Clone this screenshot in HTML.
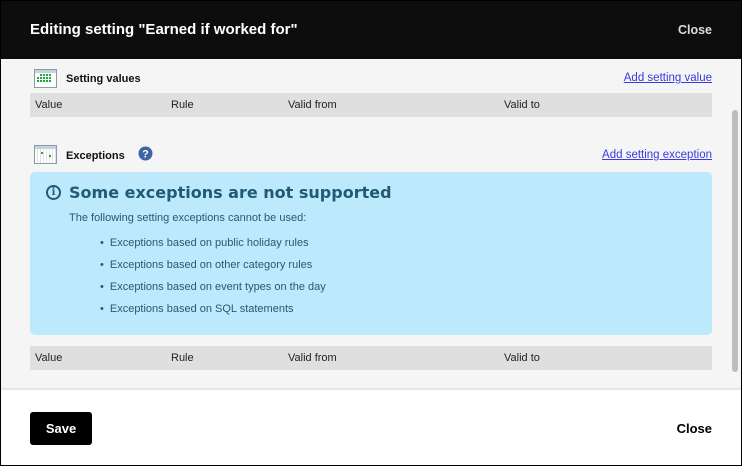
<!DOCTYPE html><html><head><style>
*{margin:0;padding:0;box-sizing:border-box}
body{width:742px;height:466px;overflow:hidden;font-family:"Liberation Sans",sans-serif;background:#fff;position:relative}
.frame{position:absolute;inset:0;border:1px solid #000}
.hdr{position:absolute;left:0;top:0;width:742px;height:59px;background:#0d0d0d;color:#fff}
.hdr h1{position:absolute;left:30px;top:21px;font-size:15px;font-weight:bold}
.hdr .c{position:absolute;right:30px;top:23px;font-size:12.5px;font-weight:bold;color:#ddd}
.body{position:absolute;left:1px;top:59px;width:740px;height:331px;background:#f5f5f5;border-bottom:2px solid #e6e6e6}
.sb{position:absolute;left:732px;top:110px;width:6px;height:262px;background:#bdbdbd;border-radius:3px}
.sec{position:absolute;left:66px;font-size:11px;font-weight:bold;color:#111}
.ico{position:absolute;left:34px;width:23px;height:19px;border:1px solid #8a9aa8;background:#fff}
.ico .t{height:3px;background:#c8d2dc}
a{position:absolute;right:30px;font-size:11.5px;color:#3a3adf;text-decoration:underline}
.th{position:absolute;left:30px;width:682px;height:24px;background:#dfdfdf;font-size:11px;color:#222}
.th span{position:absolute;top:6px}
.info{position:absolute;left:30px;top:172px;width:682px;height:163px;background:#bde9fc;border-radius:5px;color:#2a5872}
.info h2{position:absolute;left:39px;top:11px;font-family:"DejaVu Sans",sans-serif;font-size:16px;font-weight:bold;color:#215a75}
.info .i{position:absolute;left:16px;top:13px;width:15px;height:15px;border:2px solid #215a75;border-radius:50%;font:bold 10px "DejaVu Serif",serif;text-align:center;line-height:11px;color:#215a75}
.info p{position:absolute;left:39px;top:40px;font-size:11px}
.info ul{position:absolute;left:70px;top:65px;font-size:11px;list-style:none}
.info li{height:22px}
.info li:before{content:"•";margin-right:6px}
.save{position:absolute;left:30px;top:412px;width:62px;height:33px;background:#000;border-radius:3px;color:#fff;font-size:13px;font-weight:bold;text-align:center;line-height:33px}
.fc{position:absolute;right:30px;top:421px;font-size:13px;font-weight:bold}
</style></head><body>
<div class="hdr"><h1>Editing setting "Earned if worked for"</h1><div class="c">Close</div></div>
<div class="body"></div>
<div class="sb"></div>
<div class="ico" style="top:69px"><div class="t"></div><svg width="21" height="14"><g fill="#1fa83a"><rect x="5" y="1" width="2" height="2"/><rect x="8" y="1" width="2" height="2"/><rect x="11" y="1" width="2" height="2"/><rect x="14" y="1" width="2" height="2"/><rect x="2" y="4" width="2" height="2"/><rect x="5" y="4" width="2" height="2"/><rect x="8" y="4" width="2" height="2"/><rect x="11" y="4" width="2" height="2"/><rect x="14" y="4" width="2" height="2"/><rect x="2" y="7" width="2" height="2"/><rect x="5" y="7" width="2" height="2"/><rect x="8" y="7" width="2" height="2"/><rect x="11" y="7" width="2" height="2"/><rect x="14" y="7" width="2" height="2"/></g></svg></div>
<div class="sec" style="top:73px">Setting values</div>
<a style="top:72px">Add setting value</a>
<div class="th" style="top:93px"><span style="left:5px">Value</span><span style="left:141px">Rule</span><span style="left:258px">Valid from</span><span style="left:474px">Valid to</span></div>
<div class="ico" style="top:145px"><div class="t"></div><svg width="21" height="14" style="background:repeating-linear-gradient(90deg,transparent 0 2px,#e3e3e3 2px 3px)"><g fill="#1fa83a"><rect x="6" y="3" width="2" height="2"/><rect x="14" y="6" width="2" height="2"/></g></svg></div>
<div class="sec" style="top:150px">Exceptions</div>
<svg style="position:absolute;left:138px;top:146px" width="15" height="15"><circle cx="7.5" cy="7.5" r="7" fill="#3f64a6"/><text x="7.5" y="11.5" font-family="Liberation Sans" font-weight="bold" font-size="11" fill="#fff" text-anchor="middle">?</text></svg>
<a style="top:149px">Add setting exception</a>
<div class="info"><div class="i">i</div><h2>Some exceptions are not supported</h2><p>The following setting exceptions cannot be used:</p>
<ul><li>Exceptions based on public holiday rules</li><li>Exceptions based on other category rules</li><li>Exceptions based on event types on the day</li><li>Exceptions based on SQL statements</li></ul></div>
<div class="th" style="top:346px"><span style="left:5px">Value</span><span style="left:141px">Rule</span><span style="left:258px">Valid from</span><span style="left:474px">Valid to</span></div>
<div class="save">Save</div><div class="fc">Close</div>
<div class="frame"></div>
</body></html>
